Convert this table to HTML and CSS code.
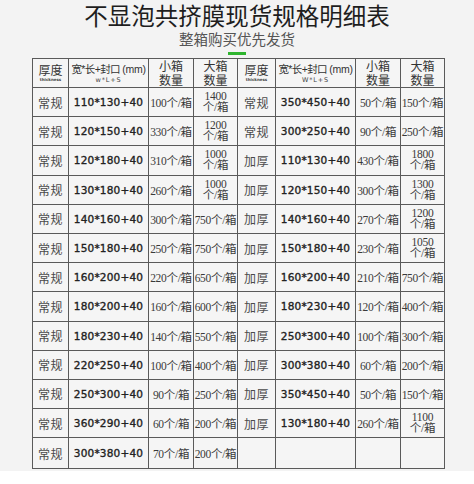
FILE: index.html
```html
<!DOCTYPE html>
<html lang="zh">
<head>
<meta charset="utf-8">
<title>不显泡共挤膜现货规格明细表</title>
<link rel="stylesheet" href="styles.css">
</head>
<body>
<div class="sheet">
  <h1 class="title">不显泡共挤膜现货规格明细表</h1>
  <p class="subtitle">整箱购买优先发货</p>
  <div class="bar"></div>
  <table class="spec">
    <colgroup>
      <col class="c1"><col class="c2"><col class="c3"><col class="c4">
      <col class="c5"><col class="c6"><col class="c7"><col class="c8">
    </colgroup>
    <thead>
      <tr>
        <th><span class="hmain">厚度</span><span class="hsub tiny">thickness</span></th>
        <th><span class="hmain wide">宽*长+封口 <span class="mm">(mm)</span></span><span class="hsub">w*L+S</span></th>
        <th class="two">小箱<br>数量</th>
        <th class="two">大箱<br>数量</th>
        <th><span class="hmain">厚度</span><span class="hsub tiny">thickness</span></th>
        <th><span class="hmain wide">宽*长+封口 <span class="mm">(mm)</span></span><span class="hsub">W*L+S</span></th>
        <th class="two">小箱<br>数量</th>
        <th class="two">大箱<br>数量</th>
      </tr>
    </thead>
    <tbody>
      <tr><td class="t">常规</td><td class="s">110*130+40</td><td class="q">100个/箱</td><td class="q ml">1400<br>个/箱</td><td class="t">常规</td><td class="s">350*450+40</td><td class="q">50个/箱</td><td class="q">150个/箱</td></tr>
      <tr><td class="t">常规</td><td class="s">120*150+40</td><td class="q">330个/箱</td><td class="q ml">1200<br>个/箱</td><td class="t">常规</td><td class="s">300*250+40</td><td class="q">90个/箱</td><td class="q">250个/箱</td></tr>
      <tr><td class="t">常规</td><td class="s">120*180+40</td><td class="q">310个/箱</td><td class="q ml">1000<br>个/箱</td><td class="t">加厚</td><td class="s">110*130+40</td><td class="q">430个/箱</td><td class="q ml">1800<br>个/箱</td></tr>
      <tr><td class="t">常规</td><td class="s">130*180+40</td><td class="q">260个/箱</td><td class="q ml">1000<br>个/箱</td><td class="t">加厚</td><td class="s">120*150+40</td><td class="q">300个/箱</td><td class="q ml">1300<br>个/箱</td></tr>
      <tr><td class="t">常规</td><td class="s">140*160+40</td><td class="q">300个/箱</td><td class="q">750个/箱</td><td class="t">加厚</td><td class="s">140*160+40</td><td class="q">270个/箱</td><td class="q ml">1200<br>个/箱</td></tr>
      <tr><td class="t">常规</td><td class="s">150*180+40</td><td class="q">250个/箱</td><td class="q">750个/箱</td><td class="t">加厚</td><td class="s">150*180+40</td><td class="q">230个/箱</td><td class="q ml">1050<br>个/箱</td></tr>
      <tr><td class="t">常规</td><td class="s">160*200+40</td><td class="q">220个/箱</td><td class="q">650个/箱</td><td class="t">加厚</td><td class="s">160*200+40</td><td class="q">210个/箱</td><td class="q">750个/箱</td></tr>
      <tr><td class="t">常规</td><td class="s">180*200+40</td><td class="q">160个/箱</td><td class="q">600个/箱</td><td class="t">加厚</td><td class="s">180*230+40</td><td class="q">120个/箱</td><td class="q">400个/箱</td></tr>
      <tr><td class="t">常规</td><td class="s">180*230+40</td><td class="q">140个/箱</td><td class="q">550个/箱</td><td class="t">加厚</td><td class="s">250*300+40</td><td class="q">100个/箱</td><td class="q">300个/箱</td></tr>
      <tr><td class="t">常规</td><td class="s">220*250+40</td><td class="q">100个/箱</td><td class="q">400个/箱</td><td class="t">加厚</td><td class="s">300*380+40</td><td class="q">60个/箱</td><td class="q">200个/箱</td></tr>
      <tr><td class="t">常规</td><td class="s">250*300+40</td><td class="q">90个/箱</td><td class="q">250个/箱</td><td class="t">加厚</td><td class="s">350*450+40</td><td class="q">50个/箱</td><td class="q">150个/箱</td></tr>
      <tr><td class="t">常规</td><td class="s">360*290+40</td><td class="q">60个/箱</td><td class="q">200个/箱</td><td class="t">加厚</td><td class="s">130*180+40</td><td class="q">260个/箱</td><td class="q ml">1100<br>个/箱</td></tr>
      <tr class="last"><td class="t">常规</td><td class="s">300*380+40</td><td class="q">70个/箱</td><td class="q">200个/箱</td><td class="t"></td><td class="s"></td><td class="q"></td><td class="q"></td></tr>
    </tbody>
  </table>
</div>
</body>
</html>
```

FILE: styles.css
```css
html, body {
  margin: 0;
  padding: 0;
  background: #ffffff;
}

.sheet {
  background: #f3f3f3;
  height: 471px;
  padding-top: 1px;
  box-sizing: border-box;
  font-family: "Noto Sans CJK SC", "Noto Sans", sans-serif;
}

.title {
  margin: 0;
  text-align: center;
  font-size: 23.5px;
  line-height: 28px;
  font-weight: 400;
  color: #1e1e1e;
}

.subtitle {
  margin: 0;
  text-align: center;
  font-size: 14.5px;
  line-height: 20px;
  color: #555555;
}

.bar {
  width: 18px;
  height: 3px;
  background: #2fb52f;
  margin: 3px auto 0;
}

.spec {
  border-collapse: collapse;
  table-layout: fixed;
  width: 412px;
  margin: 3px 0 0 32px;
  background: #f5f5f5;
}

.c1 { width: 36px; }
.c2 { width: 80px; }
.c3 { width: 45px; }
.c4 { width: 44px; }
.c5 { width: 38px; }
.c6 { width: 80px; }
.c7 { width: 45px; }
.c8 { width: 44px; }

.spec th, .spec td {
  border: 1px solid #5a5a5a;
  padding: 0;
  text-align: center;
  vertical-align: middle;
  white-space: nowrap;
}

.spec thead tr { height: 28px; }
.spec tbody tr { height: 29.2px; }
.spec tbody tr.last { height: 31px; }

.spec th {
  font-weight: 400;
  color: #333333;
}

.hmain {
  display: block;
  font-size: 12px;
  line-height: 14px;
  color: #333333;
}

.hmain.wide {
  font-family: "Liberation Sans", "Noto Sans CJK SC", sans-serif;
  font-size: 10.5px;
  letter-spacing: -0.6px;
}

.mm {
  font-size: 10.5px;
  letter-spacing: -0.3px;
}

.hsub {
  display: block;
  font-family: "DejaVu Sans", sans-serif;
  font-size: 6.5px;
  line-height: 8px;
  letter-spacing: 0.8px;
  color: #444444;
}

.hsub.tiny {
  font-size: 4px;
  line-height: 6px;
  letter-spacing: 0;
  font-weight: 700;
}

.two {
  font-size: 12px;
  line-height: 14px;
}

.t {
  font-size: 12px;
  color: #4a4a4a;
  letter-spacing: 0.5px;
}

.s {
  font-family: "DejaVu Sans", sans-serif;
  font-size: 10.5px;
  letter-spacing: 0.2px;
  -webkit-text-stroke: 0.35px #222222;
  color: #222222;
}

.q {
  font-family: "Liberation Serif", "Noto Sans CJK SC", serif;
  font-size: 11.5px;
  color: #3a3a3a;
  letter-spacing: -0.3px;
}

.q.ml {
  line-height: 11px;
}
```
